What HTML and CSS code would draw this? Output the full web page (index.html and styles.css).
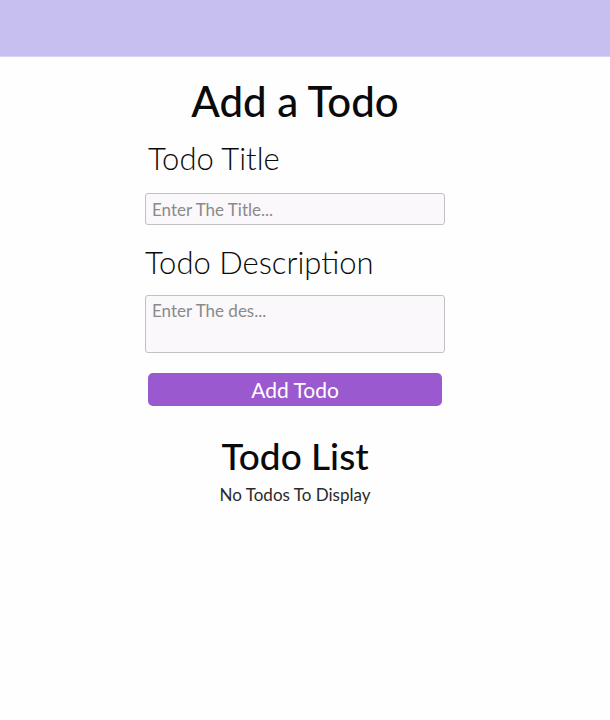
FILE: index.html
```html
<!DOCTYPE html>
<html>
<head>
<meta charset="utf-8">
<link rel="stylesheet" href="styles.css">
</head>
<body>
<header class="topbar"></header>
<main class="page">
  <h1 class="page-title">Add a Todo</h1>
  <form class="todo-form">
    <label class="field-label label-title" for="title">Todo Title</label>
    <input class="field-input" id="title" type="text" placeholder="Enter The Title...">
    <label class="field-label label-desc" for="desc">Todo Description</label>
    <textarea class="field-area" id="desc" placeholder="Enter The des..."></textarea>
    <button class="add-btn" type="button">Add Todo</button>
  </form>
  <h2 class="list-title">Todo List</h2>
  <p class="empty">No Todos To Display</p>
</main>
</body>
</html>
```
FILE: styles.css
```css
* { box-sizing: border-box; }
body {
  margin: 0;
  background: #fefefe;
  font-family: "Lato", "Open Sans", sans-serif;
  color: #0a0a0a;
}
.topbar {
  height: 57px;
  background: #c6bfef;
  border-bottom: 1px solid #d9d4f3;
}
.page {
  width: 590px;
  display: flex;
  flex-direction: column;
  align-items: center;
}
.page-title {
  margin: 18px 0 0;
  font-size: 42px;
  font-weight: 500;
  line-height: 52px;
}
.todo-form {
  width: 300px;
  display: flex;
  flex-direction: column;
}
.field-label {
  font-size: 31px;
  font-weight: 300;
  line-height: 36px;
}
.label-title { margin: 13px 0 0 3px; }
.label-desc { margin: 19px 0 0 0; font-size: 31px; }
.field-input, .field-area {
  width: 300px;
  border: 1px solid #c2c0c4;
  border-radius: 3px;
  background: #faf8fb;
  font-family: inherit;
  font-size: 17px;
  padding: 4px 6px;
  color: #333;
}
.field-input::placeholder, .field-area::placeholder { color: #8a8a8a; }
.field-input { height: 32px; margin-top: 17px; }
.field-area { height: 58px; margin-top: 15px; resize: none; display: block; }
.add-btn {
  margin: 20px 3px 0;
  height: 33px;
  border: none;
  border-radius: 5px;
  background: #9b59d0;
  color: #fff;
  font-family: inherit;
  font-size: 21px;
  font-weight: 400;
}
.list-title {
  margin: 28px 0 0;
  font-size: 37px;
  font-weight: 500;
  line-height: 44px;
}
.empty {
  margin: 6px 0 0;
  font-size: 17px;
  color: #2a2a2a;
}
```
